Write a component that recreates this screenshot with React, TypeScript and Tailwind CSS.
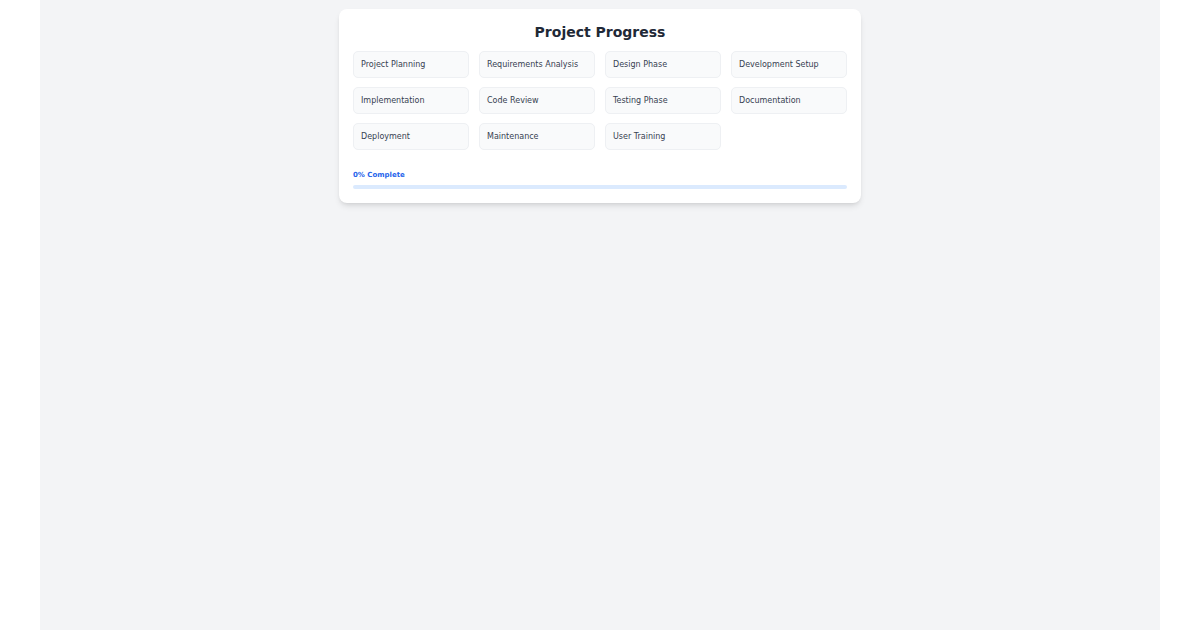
import React from "react";

const items = [
  "Project Planning",
  "Requirements Analysis",
  "Design Phase",
  "Development Setup",
  "Implementation",
  "Code Review",
  "Testing Phase",
  "Documentation",
  "Deployment",
  "Maintenance",
  "User Training",
];

export default function App() {
  return (
    <div className="w-full h-[630px] bg-white" style={{ fontFamily: '"DejaVu Sans", sans-serif' }}>
      <div className="mx-auto w-[1120px] h-full bg-[#f3f4f6] pt-[9px]">
        <div className="mx-auto w-[522px] bg-white rounded-lg shadow-md p-[14px]">
          <h2 className="text-[14px] leading-[18px] font-bold text-center text-[#1f2937] mb-[10px]">
            Project Progress
          </h2>
          <div className="grid grid-cols-4 gap-x-[10px] gap-y-[9px]">
            {items.map((t) => (
              <div
                key={t}
                className="h-[27px] flex items-center pl-[7px] pt-[1px] bg-[#f9fafb] border border-[#eef0f3] rounded-[5px] text-[8px] text-[#374151]"
              >
                {t}
              </div>
            ))}
          </div>
          <div className="mt-[20px] text-[7px] leading-[10px] font-bold text-[#2563eb]">0% Complete</div>
          <div className="mt-[5px] h-[4px] w-full rounded-full bg-[#dbeafe]">
            <div className="h-full rounded-full bg-[#2563eb]" style={{ width: "0%" }} />
          </div>
        </div>
      </div>
    </div>
  );
}
